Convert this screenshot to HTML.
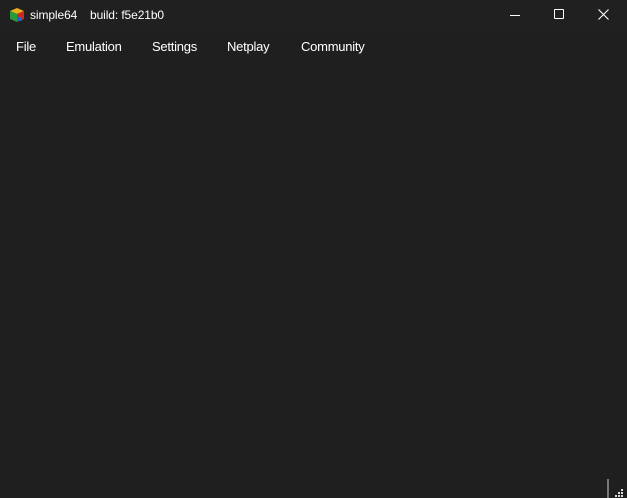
<!DOCTYPE html>
<html><head><style>
html,body{margin:0;padding:0;width:627px;height:498px;overflow:hidden;background:#1f1f1f;font-family:"Liberation Sans",sans-serif;color:#fff}
.t{position:absolute;top:0;left:0;width:627px;height:31px;background:#202020}
.txt{position:absolute;font-size:12px;color:#fff;letter-spacing:-0.1px}
.m{position:absolute;top:39px;font-size:13px;color:#fff;letter-spacing:-0.25px}
</style></head><body>
<div class="t"></div>
<svg style="position:absolute;left:9px;top:7px" width="16" height="16" viewBox="0 0 16 16">
<polygon points="8,1 15,4 8,7 1,4" fill="#e8b020"/>
<polygon points="1,4 8,7 8,15 1,12" fill="#2a9a3a"/>
<polygon points="8,7 15,4 15,12 8,15" fill="#d02a20"/>
<rect x="9" y="10" width="4" height="4" fill="#2860c8"/>
</svg>
<div class="txt" style="left:30px;top:8px">simple64</div>
<div class="txt" style="left:90px;top:8px">build: f5e21b0</div>
<div style="position:absolute;left:510px;top:15px;width:10px;height:1px;background:#fff"></div>
<div style="position:absolute;left:554px;top:9px;width:8px;height:8px;border:1px solid #fff;border-radius:1px"></div>
<svg style="position:absolute;left:598px;top:9px" width="11" height="11" viewBox="0 0 11 11"><path d="M0.5 0.5L10.5 10.5M10.5 0.5L0.5 10.5" stroke="#fff" stroke-width="1.1"/></svg>
<div class="m" style="left:16px">File</div>
<div class="m" style="left:66px">Emulation</div>
<div class="m" style="left:152px">Settings</div>
<div class="m" style="left:227px">Netplay</div>
<div class="m" style="left:301px">Community</div>
<div style="position:absolute;left:607px;top:479px;width:2px;height:19px;background:#777"></div>
<svg style="position:absolute;left:614px;top:488px" width="10" height="10" viewBox="0 0 10 10" fill="#ddd">
<rect x="7" y="1" width="2" height="2"/><rect x="4" y="4" width="2" height="2"/><rect x="7" y="4" width="2" height="2"/><rect x="1" y="7" width="2" height="2"/><rect x="4" y="7" width="2" height="2"/><rect x="7" y="7" width="2" height="2"/>
</svg>
</body></html>
